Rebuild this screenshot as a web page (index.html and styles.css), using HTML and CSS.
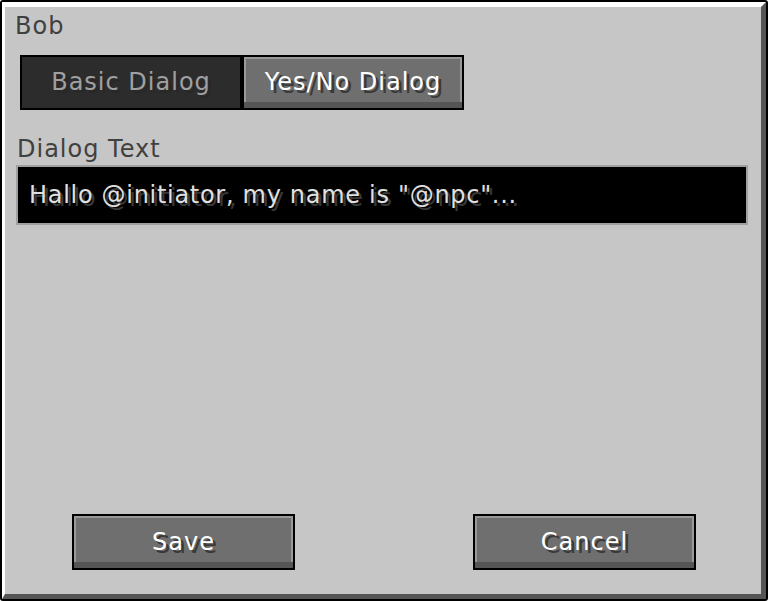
FILE: index.html
```html
<!DOCTYPE html>
<html>
<head>
<meta charset="utf-8">
<link rel="stylesheet" href="styles.css">
</head>
<body>
<div class="frame">
  <div class="panel">
    <div class="title">Bob</div>
    <div class="tabs">
      <div class="tab tab-off">Basic Dialog</div>
      <div class="tab tab-on">Yes/No Dialog</div>
    </div>
    <div class="label">Dialog Text</div>
    <div class="field">Hallo @initiator, my name is "@npc"...</div>
    <div class="actions">
      <div class="btn">Save</div>
      <div class="btn">Cancel</div>
    </div>
  </div>
</div>
</body>
</html>
```
FILE: styles.css
```css
html, body {
  margin: 0;
  padding: 0;
  background: #ffffff;
}
body {
  font-family: "DejaVu Sans", "Noto Sans", sans-serif;
  font-size: 24px;
  line-height: 29px;
  letter-spacing: 1px;
}
.frame {
  width: 768px;
  height: 601px;
  box-sizing: border-box;
  border: 2px solid #000;
  border-radius: 3px;
}
.panel {
  height: 100%;
  box-sizing: border-box;
  background: #c6c6c6;
  border-top: 5px solid #ffffff;
  border-left: 3px solid #ffffff;
  border-right: 5px solid #555555;
  border-bottom: 5px solid #555555;
  padding: 5px 10px 24px 10px;
  display: flex;
  flex-direction: column;
}
.title {
  color: #404040;
}
.tabs {
  display: flex;
  margin-top: 14px;
  margin-left: 5px;
}
.tab {
  width: 222px;
  height: 55px;
  box-sizing: border-box;
  border: 2px solid #000;
  display: flex;
  align-items: center;
  justify-content: center;
}
.tab-off {
  background: #2c2c2c;
  color: #a0a0a0;
  text-shadow: 3px 3px 0 #282828;
}
.tab-on {
  background: #6f6f6f;
  color: #ffffff;
  text-shadow: 3px 3px 0 #3a3a3a;
  box-shadow: inset 0 -6px 0 #565656, inset 0 0 0 2px #999999;
}
.label {
  color: #404040;
  margin-top: 25px;
  margin-left: 2px;
}
.field {
  margin-top: 1px;
  margin-left: 1px;
  width: 732px;
  height: 60px;
  box-sizing: border-box;
  border: 2px solid #a0a0a0;
  background: #000;
  color: #e0e0e0;
  text-shadow: 3px 3px 0 #383838;
  padding-left: 11px;
  letter-spacing: 0.7px;
  display: flex;
  align-items: center;
  white-space: pre;
}
.actions {
  margin-top: auto;
  display: flex;
  justify-content: space-between;
  padding: 0 55px 0 57px;
}
.btn {
  width: 223px;
  height: 56px;
  box-sizing: border-box;
  border: 2px solid #000;
  background: #6f6f6f;
  color: #ffffff;
  text-shadow: 3px 3px 0 #3a3a3a;
  box-shadow: inset 0 -6px 0 #565656, inset 0 0 0 2px #999999;
  display: flex;
  align-items: center;
  justify-content: center;
}
```
